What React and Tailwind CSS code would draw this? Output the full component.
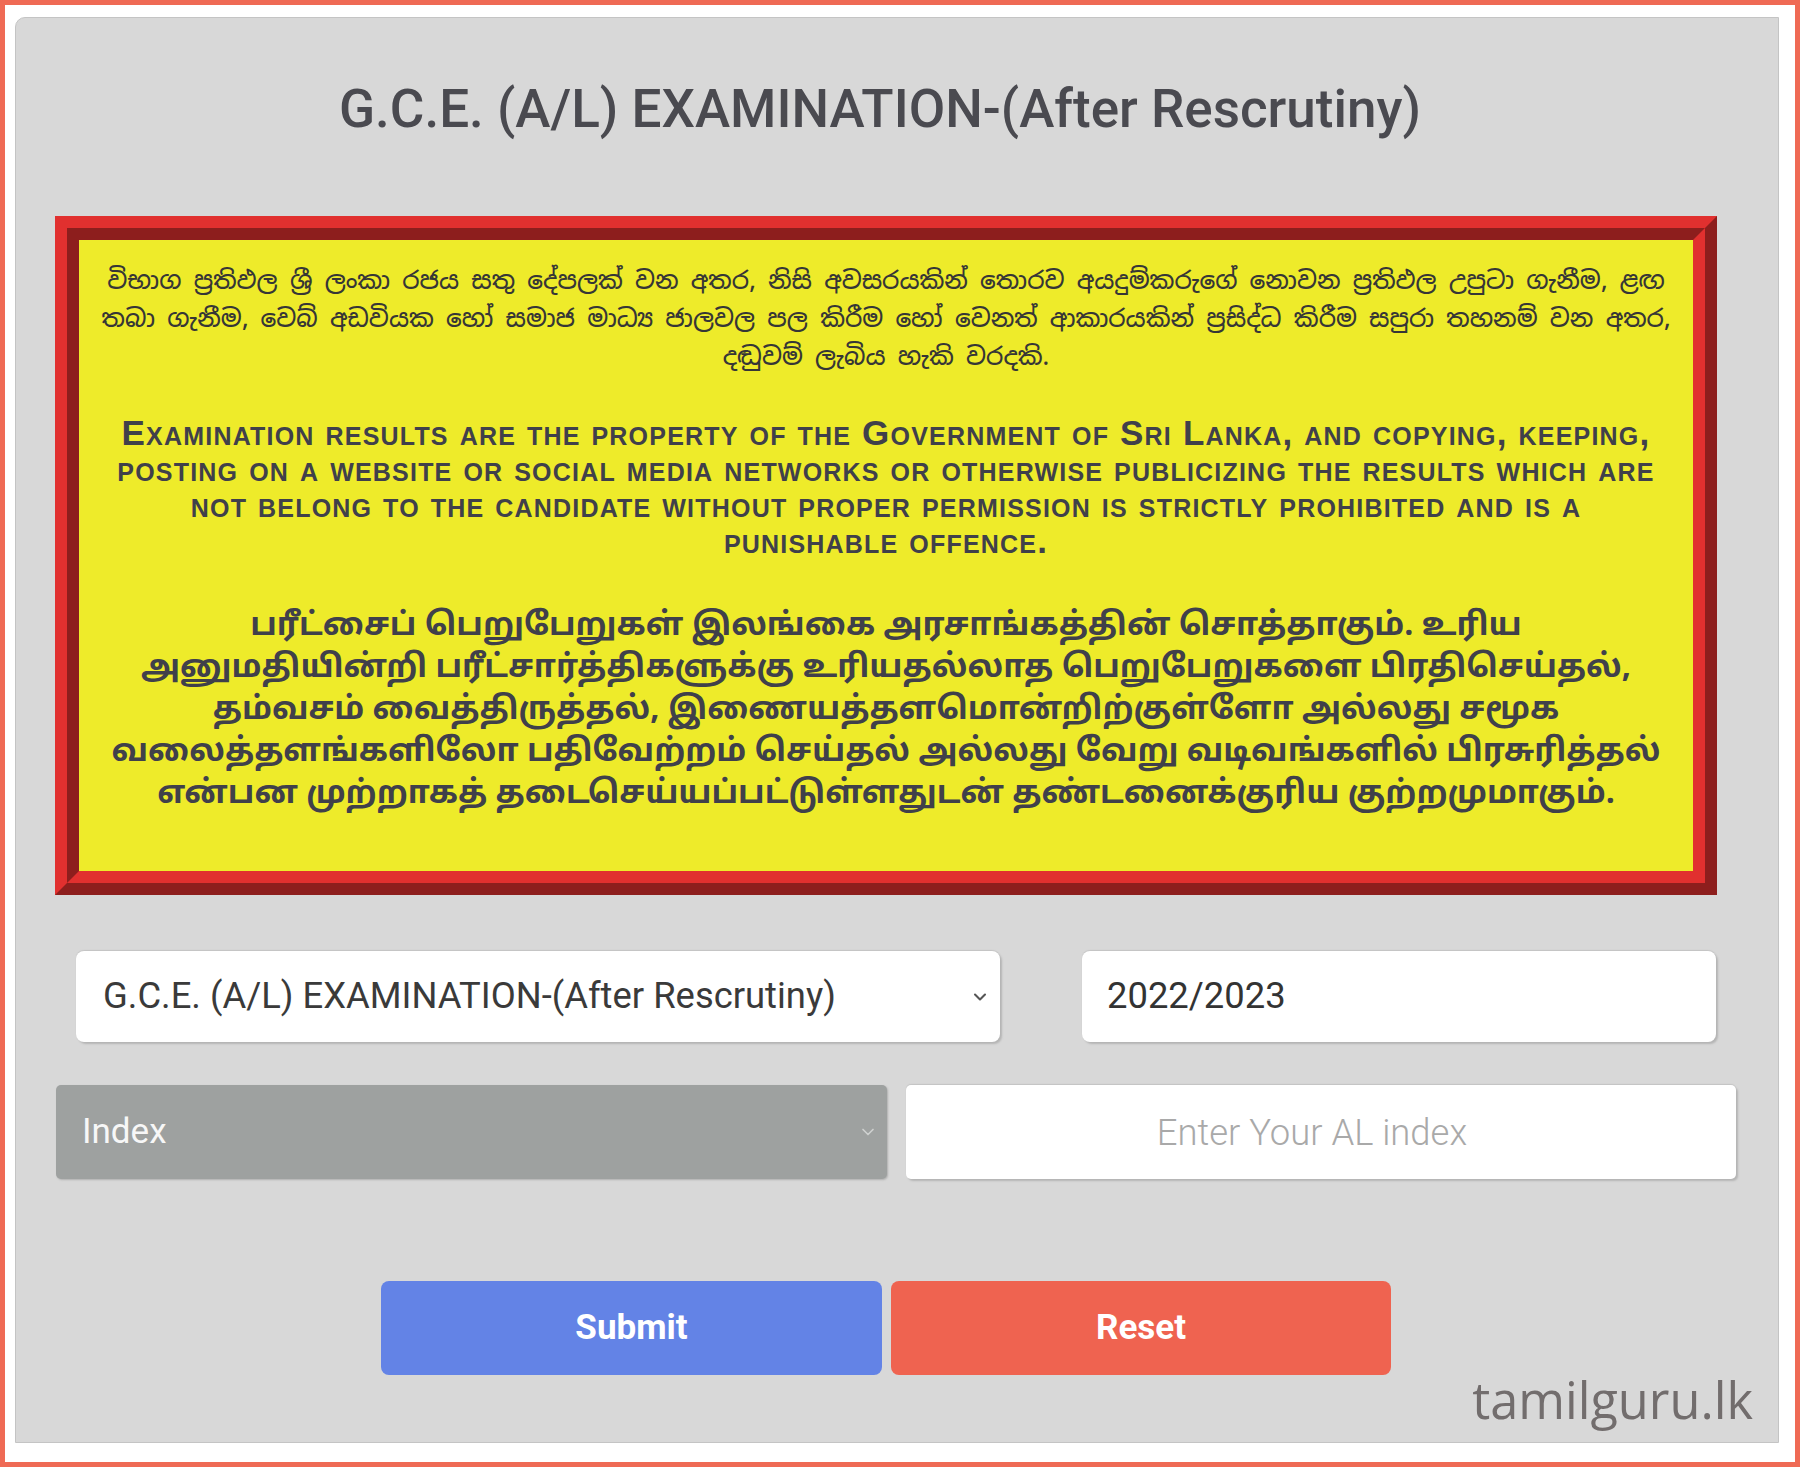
import { ChevronDown } from "lucide-react";

const sinhala = [
  "විභාග ප්‍රතිඵල ශ්‍රී ලංකා රජය සතු දේපලක් වන අතර, නිසි අවසරයකින් තොරව අයදුම්කරුගේ නොවන ප්‍රතිඵල උපුටා ගැනීම, ළඟ",
  "තබා ගැනීම, වෙබ් අඩවියක හෝ සමාජ මාධ්‍ය ජාලවල පල කිරීම හෝ වෙනත් ආකාරයකින් ප්‍රසිද්ධ කිරීම සපුරා තහනම් වන අතර,",
  "දඬුවම් ලැබිය හැකි වරදකි.",
];

const english = [
  "Examination results are the property of the Government of Sri Lanka, and copying, keeping,",
  "posting on a website or social media networks or otherwise publicizing the results which are",
  "not belong to the candidate without proper permission is strictly prohibited and is a",
  "punishable offence.",
];

const tamil = [
  "பரீட்சைப் பெறுபேறுகள் இலங்கை அரசாங்கத்தின் சொத்தாகும். உரிய",
  "அனுமதியின்றி பரீட்சார்த்திகளுக்கு உரியதல்லாத பெறுபேறுகளை பிரதிசெய்தல்,",
  "தம்வசம் வைத்திருத்தல், இணையத்தளமொன்றிற்குள்ளோ அல்லது சமூக",
  "வலைத்தளங்களிலோ பதிவேற்றம் செய்தல் அல்லது வேறு வடிவங்களில் பிரசுரித்தல்",
  "என்பன முற்றாகத் தடைசெய்யப்பட்டுள்ளதுடன் தண்டனைக்குரிய குற்றமுமாகும்.",
];

export default function App() {
  return (
    <div className="w-[1800px] h-[1467px] bg-white border-[5px] border-[#ef6a55] pt-[12px] pl-[10px] pr-[16px] pb-[19px]">
      <div className="relative h-full bg-[#d8d8d8] border border-[#c4c4c4] rounded-tl-[10px] pl-[39px] pt-[59px] font-['Roboto',sans-serif]">
        <h1 className="w-[1662px] text-center text-[53px] leading-[64px] font-medium text-[#4a4a50] pr-[12px]">
          G.C.E. (A/L) EXAMINATION-(After Rescrutiny)
        </h1>

        <div className="mt-[75px] w-[1662px] h-[679px] border-[24px] [--tw-border-style:ridge] [border-style:ridge] border-[#e1302f] bg-[#eeeb2a] px-[4px] pt-[21px] text-center">
          <div className="font-['Noto_Sans_Sinhala','Iskoola_Pota',sans-serif] text-[24.4px] leading-[38px] font-medium text-[#363636]">
            {sinhala.map((l, i) => (
              <div key={i} className="whitespace-nowrap">{l}</div>
            ))}
          </div>
          <div className="mt-[40px] font-['Liberation_Sans',Arial,sans-serif] font-bold text-[35px] leading-[36px] tracking-[1.2px] text-[#40404a] [font-variant:small-caps]">
            {english.map((l, i) => (
              <div key={i} className="whitespace-nowrap">{l}</div>
            ))}
          </div>
          <div className="mt-[47px] font-['Noto_Sans_Tamil','Latha',sans-serif] font-bold text-[32px] leading-[42px] text-[#40404a]">
            {tamil.map((l, i) => (
              <div key={i} className="whitespace-nowrap">{l}</div>
            ))}
          </div>
        </div>

        <div className="mt-[56px] ml-[21px] flex gap-[82px]">
          <div className="w-[924px] h-[91px] shrink-0 bg-white rounded-[8px] shadow-[2px_2px_2px_#b5b5b5,0_-1px_1px_#c4c4c4] flex items-center justify-between pl-[27px] pr-[10px]">
            <span className="text-[36.4px] text-[#3a3a3a]">G.C.E. (A/L) EXAMINATION-(After Rescrutiny)</span>
            <ChevronDown size={20} strokeWidth={2.5} className="text-[#555]" />
          </div>
          <div className="w-[634px] h-[91px] shrink-0 bg-white rounded-[8px] shadow-[2px_2px_2px_#b5b5b5,0_-1px_1px_#c4c4c4] flex items-center pl-[25px]">
            <span className="text-[36.4px] text-[#333]">2022/2023</span>
          </div>
        </div>

        <div className="mt-[43px] ml-[1px] flex gap-[19px]">
          <div className="w-[831px] h-[94px] shrink-0 bg-[#9ea1a0] rounded-[5px] shadow-[1px_1px_2px_#b0b0b0] flex items-center justify-between pl-[26px] pr-[9px]">
            <span className="text-[35px] text-[#f7f7f7]">Index</span>
            <ChevronDown size={20} strokeWidth={2} className="text-[#cfd1d0]" />
          </div>
          <input
            readOnly
            placeholder="Enter Your AL index"
            className="w-[830px] h-[94px] shrink-0 bg-white rounded-[5px] shadow-[2px_2px_2px_#b5b5b5,0_-1px_1px_#c4c4c4] text-center pr-[18px] text-[36.4px] font-light outline-none placeholder:text-[#a9a9a9]"
          />
        </div>

        <div className="mt-[102px] w-[1662px] flex justify-center gap-[9px]">
          <button className="w-[501px] h-[94px] rounded-[8px] bg-[#6383e6] text-white text-[35px] font-bold">
            Submit
          </button>
          <button className="w-[500px] h-[94px] rounded-[8px] bg-[#ef6350] text-white text-[35px] font-bold">
            Reset
          </button>
        </div>

        <div className="absolute right-[25px] bottom-[17px] font-['Open_Sans',sans-serif] text-[50.5px] leading-[50px] text-[#726d6d]">
          tamilguru.lk
        </div>
      </div>
    </div>
  );
}
